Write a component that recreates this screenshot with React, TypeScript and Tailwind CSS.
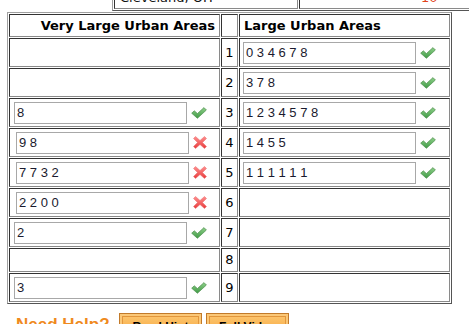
import React from 'react';

interface Entry {
  value: string;
  ok: boolean;
}

interface Row {
  n: number;
  left: Entry | null;
  right: Entry | null;
}

const rows: Row[] = [
  { n: 1, left: null, right: { value: '0 3 4 6 7 8', ok: true } },
  { n: 2, left: null, right: { value: '3 7 8', ok: true } },
  { n: 3, left: { value: '8', ok: true }, right: { value: '1 2 3 4 5 7 8', ok: true } },
  { n: 4, left: { value: '9 8', ok: false }, right: { value: '1 4 5 5', ok: true } },
  { n: 5, left: { value: '7 7 3 2', ok: false }, right: { value: '1 1 1 1 1 1', ok: true } },
  { n: 6, left: { value: '2 2 0 0', ok: false }, right: null },
  { n: 7, left: { value: '2', ok: true }, right: null },
  { n: 8, left: null, right: null },
  { n: 9, left: { value: '3', ok: true }, right: null },
];

const CheckIcon: React.FC = () => (
  <svg width="16" height="12" viewBox="0 0 16 12" className="shrink-0">
    <defs>
      <linearGradient id="chk" x1="0" y1="0" x2="0" y2="1">
        <stop offset="0" stopColor="#8fd08a" />
        <stop offset="1" stopColor="#3f9a45" />
      </linearGradient>
    </defs>
    <polygon
      points="0.7,6.2 3.3,3.8 6.4,6.6 13,0.6 15.4,3 6.4,11.3"
      fill="url(#chk)"
      stroke="#4f8f4f"
      strokeWidth="0.7"
      strokeLinejoin="round"
    />
  </svg>
);

const CrossIcon: React.FC = () => (
  <svg width="14" height="13" viewBox="0 0 14 13" className="shrink-0">
    <defs>
      <linearGradient id="crs" x1="0" y1="0" x2="0" y2="1">
        <stop offset="0" stopColor="#ff8f8f" />
        <stop offset="1" stopColor="#e83c3c" />
      </linearGradient>
    </defs>
    <polygon
      points="0.5,2.5 2.5,0.5 7,4.5 11.5,0.5 13.5,2.5 9.5,6.5 13.5,10.5 11.5,12.5 7,8.5 2.5,12.5 0.5,10.5 4.5,6.5"
      fill="url(#crs)"
      stroke="#e86a6a"
      strokeWidth="0.5"
      strokeLinejoin="round"
    />
  </svg>
);

const Field: React.FC<{ entry: Entry }> = ({ entry }) => (
  <div className="flex items-center gap-[4px]">
    <input
      readOnly
      value={entry.value}
      className="w-[173px] h-[22px] border border-[#a8a8a8] pl-[2px] text-[13px] text-[#1a1a2e] bg-white outline-none font-['Liberation_Sans',Arial,sans-serif]"
    />
    {entry.ok ? <CheckIcon /> : <CrossIcon />}
  </div>
);

const cell =
  'p-0 align-middle border border-t-[#333] border-l-[#333] border-r-[#8a8a8a] border-b-[#8a8a8a]';

const App: React.FC = () => {
  return (
    <div className="w-[469px] h-[324px] overflow-hidden bg-white text-black font-['DejaVu_Sans',Verdana,sans-serif]">
      {/* tail of the table above */}
      <div className="h-[11px] overflow-hidden flex items-end pl-[112px]">
        <div className="flex shrink-0 w-[420px] p-px gap-px border border-t-[#a0a0a0] border-l-[#a0a0a0] border-r-[#555] border-b-[#555]">
          <div className="w-[184px] h-[24px] flex items-end pl-[5px] pb-[2px] text-[13px] leading-[16px] text-[#111] border border-t-[#333] border-l-[#333] border-r-[#8a8a8a] border-b-[#8a8a8a]">
            Cleveland, OH
          </div>
          <div className="w-[220px] h-[24px] flex items-end pl-[121px] pb-[2px] text-[13px] leading-[16px] text-[#e2431c] border border-t-[#333] border-l-[#333] border-r-[#8a8a8a] border-b-[#8a8a8a]">
            10
          </div>
        </div>
      </div>

      <table className="mt-[1px] ml-[7px] table-fixed w-[445px] border-separate border-spacing-[1px] border border-t-[#a0a0a0] border-l-[#a0a0a0] border-r-[#555] border-b-[#555]">
        <colgroup>
          <col className="w-[211px]" />
          <col className="w-[17px]" />
          <col className="w-[211px]" />
        </colgroup>
        <thead>
          <tr className="h-[23px]">
            <th className={`${cell} text-right pr-[4px] text-[13px] font-bold`}>Very Large Urban Areas</th>
            <th className={cell}></th>
            <th className={`${cell} text-left pl-[4px] text-[13px] font-bold`}>Large Urban Areas</th>
          </tr>
        </thead>
        <tbody>
          {rows.map((row) => (
            <tr key={row.n} className={row.left || row.right ? 'h-[29px]' : 'h-[24px]'}>
              <td className={cell}>
                {row.left && (
                  <div className={row.left.ok ? 'pl-[4px]' : 'pl-[6px]'}>
                    <Field entry={row.left} />
                  </div>
                )}
              </td>
              <td className={`${cell} text-center text-[13px]`}>{row.n}</td>
              <td className={cell}>
                {row.right && (
                  <div className="pl-[3px]">
                    <Field entry={row.right} />
                  </div>
                )}
              </td>
            </tr>
          ))}
        </tbody>
      </table>

      {/* help bar */}
      <div className="mt-[9px] pl-[16px] flex items-start">
        <div className="mt-[2px] w-[103px] text-[17px] leading-[20px] font-bold text-[#ef8a1e] font-['Liberation_Sans',Arial,sans-serif]">
          Need Help?
        </div>
        <button className="w-[83px] h-[28px] p-[2px] border border-[#c27a2a] bg-[#fbc878]">
          <span className="flex h-full items-center justify-center border border-[#e2963c] bg-gradient-to-b from-[#fcc36a] to-[#f4a232] text-[12px] font-bold font-['Liberation_Sans',Arial,sans-serif]">
            Read Hint
          </span>
        </button>
        <button className="ml-[4px] w-[83px] h-[28px] p-[2px] border border-[#c27a2a] bg-[#fbc878]">
          <span className="flex h-full items-center justify-center border border-[#e2963c] bg-gradient-to-b from-[#fcc36a] to-[#f4a232] text-[12px] font-bold font-['Liberation_Sans',Arial,sans-serif]">
            Full Video
          </span>
        </button>
      </div>
    </div>
  );
};

export default App;
